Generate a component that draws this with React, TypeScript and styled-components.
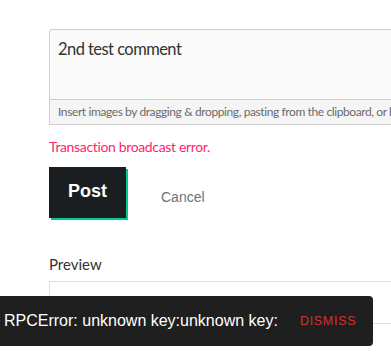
import React from "react";
import styled, { createGlobalStyle } from "styled-components";

const Global = createGlobalStyle`
  html, body { margin: 0; padding: 0; background: #fff; }
  body { overflow: hidden; width: 391px; height: 360px; }
`;

const Page = styled.div`
  position: relative;
  width: 391px;
  height: 360px;
  overflow: hidden;
  padding: 29px 0 0 49px;
  box-sizing: border-box;
  font-family: Lato, "Noto Sans", sans-serif;
`;

const Form = styled.div`
  width: 380px;
  display: flex;
  flex-direction: column;
`;

const Editor = styled.div`
  box-sizing: border-box;
  height: 71px;
  background: #fafafa;
  border: 1px solid #cfcfcf;
  border-radius: 3px 3px 0 0;
  padding: 9px 8px;
  font-size: 16.5px;
  letter-spacing: -0.55px;
  color: #333;
  line-height: 20px;
`;

const Hint = styled.div`
  box-sizing: border-box;
  height: 25px;
  background: #f5f5f5;
  border: 1px solid #cfcfcf;
  border-top: none;
  padding: 0 8px;
  font-size: 12px;
  letter-spacing: -0.4px;
  line-height: 24px;
  color: #6b6b6b;
  white-space: nowrap;
  overflow: hidden;
`;

const ErrorText = styled.div`
  margin-top: 13px;
  font-size: 14px;
  letter-spacing: -0.35px;
  line-height: 18px;
  color: #ff1f6d;
`;

const Actions = styled.div`
  margin-top: 11px;
  display: flex;
  align-items: center;
`;

const PostButton = styled.button`
  width: 77px;
  height: 51px;
  background: #1a1e21;
  border: none;
  box-shadow: 2px 2px 0 #04c994;
  color: #fff;
  font-family: "Liberation Sans", Arial, sans-serif;
  font-weight: bold;
  font-size: 18px;
  padding: 0 0 3px;
  cursor: pointer;
`;

const CancelButton = styled.button`
  margin-left: 35px;
  margin-top: 8px;
  background: none;
  border: none;
  padding: 0;
  color: #6a737c;
  font-family: "Liberation Sans", Arial, sans-serif;
  font-size: 14px;
`;

const PreviewLabel = styled.div`
  margin-top: 37px;
  font-size: 15px;
  line-height: 18px;
  color: #333;
`;

const PreviewBox = styled.div`
  margin-top: 8px;
  height: 43px;
  box-sizing: border-box;
  border: 1px solid #e1e1e1;
`;

const Snackbar = styled.div`
  position: absolute;
  left: -12px;
  top: 296px;
  width: 385px;
  height: 50px;
  box-sizing: border-box;
  background: #1f1f1f;
  border-radius: 4px;
  display: flex;
  align-items: center;
  padding: 0 0 0 16px;
  font-family: "Liberation Sans", Arial, sans-serif;
`;

const SnackText = styled.span`
  color: #fff;
  font-size: 16px;
`;

const Dismiss = styled.span`
  margin-left: 22px;
  color: #d9302c;
  font-size: 12.5px;
  letter-spacing: 0.7px;
`;

export default function App() {
  return (
    <Page>
      <Global />
      <Form>
        <Editor>2nd test comment</Editor>
        <Hint>Insert images by dragging &amp; dropping, pasting from the clipboard, or by selecting them.</Hint>
        <ErrorText>Transaction broadcast error.</ErrorText>
        <Actions>
          <PostButton>Post</PostButton>
          <CancelButton>Cancel</CancelButton>
        </Actions>
        <PreviewLabel>Preview</PreviewLabel>
        <PreviewBox />
      </Form>
      <Snackbar>
        <SnackText>RPCError: unknown key:unknown key:</SnackText>
        <Dismiss>DISMISS</Dismiss>
      </Snackbar>
    </Page>
  );
}
